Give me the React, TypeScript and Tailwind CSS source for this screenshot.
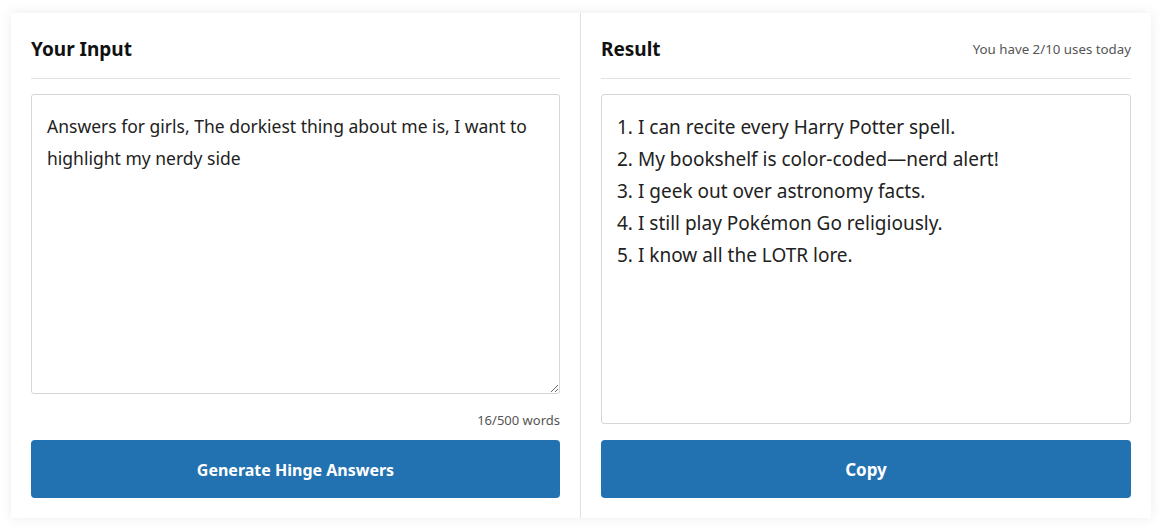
import React from "react";

const font = { fontFamily: '"Noto Sans", "Open Sans", sans-serif' };

export default function App() {
  return (
    <div className="w-[1163px] h-[528px] bg-white pt-[13px] pl-[11px]" style={font}>
      <div className="w-[1140px] h-[505px] bg-white shadow-[0_0_12px_rgba(0,0,0,0.08)] grid grid-cols-[569px_1px_570px]">
        {/* Left */}
        <div className="p-[20px] flex flex-col">
          <div className="h-[46px] border-b border-[#e2e2e2] flex items-start">
            <h2 className="text-[19px] leading-[32px] font-bold text-[#111]">Your Input</h2>
          </div>
          <textarea
            className="mt-[15px] h-[300px] w-full border border-[#d6d6d6] rounded-[3px] px-[15px] py-[15px] text-[17.5px] leading-[32px] text-[#222] resize-y outline-none"
            defaultValue="Answers for girls, The dorkiest thing about me is, I want to highlight my nerdy side"
            style={font}
          />
          <div className="mt-[16px] text-right text-[13px] leading-[20px] text-[#555]">16/500 words</div>
          <button className="mt-[10px] h-[58px] w-full rounded-[4px] bg-[#2271b1] text-white text-[16px] font-bold pt-[2px]">
            Generate Hinge Answers
          </button>
        </div>
        <div className="bg-[#e0e0e0]" />
        {/* Right */}
        <div className="p-[20px] flex flex-col">
          <div className="h-[46px] border-b border-[#e2e2e2] flex items-start justify-between">
            <h2 className="text-[19px] leading-[32px] font-bold text-[#111]">Result</h2>
            <span className="text-[13.3px] leading-[32px] text-[#555]">You have 2/10 uses today</span>
          </div>
          <div className="mt-[15px] h-[330px] border border-[#d6d6d6] rounded-[3px] px-[15px] py-[16px] text-[19px] leading-[32px] text-[#222]">
            <div>1. I can recite every Harry Potter spell.</div>
            <div>2. My bookshelf is color-coded—nerd alert!</div>
            <div>3. I geek out over astronomy facts.</div>
            <div>4. I still play Pokémon Go religiously.</div>
            <div>5. I know all the LOTR lore.</div>
          </div>
          <button className="mt-[16px] h-[58px] w-full rounded-[4px] bg-[#2271b1] text-white text-[17px] font-bold pt-[2px]">
            Copy
          </button>
        </div>
      </div>
    </div>
  );
}
